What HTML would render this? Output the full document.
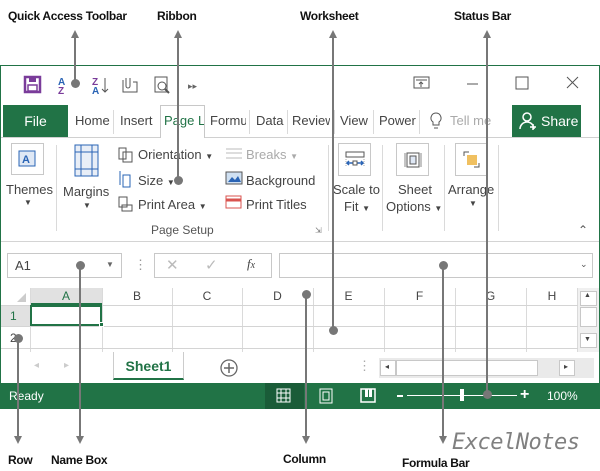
<!DOCTYPE html>
<html><head><meta charset="utf-8"><style>
*{margin:0;padding:0;box-sizing:border-box}
body{width:600px;height:471px;background:#fff;position:relative;overflow:hidden;font-family:"Liberation Sans",sans-serif;color:#333}
.a{position:absolute}
.lbl{position:absolute;font-weight:bold;font-size:12px;color:#111;letter-spacing:-0.3px}
.t{position:absolute;font-size:13px;color:#444;white-space:nowrap}
.ln{position:absolute;width:2px;background:#777}
.dot{position:absolute;width:9px;height:9px;border-radius:50%;background:#777}
.au{position:absolute;width:0;height:0;border-left:4px solid transparent;border-right:4px solid transparent;border-bottom:8px solid #777}
.ad{position:absolute;width:0;height:0;border-left:4px solid transparent;border-right:4px solid transparent;border-top:8px solid #777}
.vl{position:absolute;width:1px;background:#dadada}
.hl{position:absolute;height:1px;background:#d4d4d4}
.ch{position:absolute;top:288px;height:17px;font-size:12px;color:#444;text-align:center;line-height:17px}
.ib{position:absolute;border:1px solid #c8c8c8;background:#fff}
</style></head><body>

<div class="lbl" style="left:8px;top:9px">Quick Access Toolbar</div>
<div class="lbl" style="left:157px;top:9px">Ribbon</div>
<div class="lbl" style="left:300px;top:9px">Worksheet</div>
<div class="lbl" style="left:454px;top:9px">Status Bar</div>

<div class="a" style="left:0;top:65px;width:600px;height:344px;border:1px solid #217346;border-bottom:none;background:#fff"></div>

<svg class="a" style="left:22px;top:74px" width="180" height="22">
<rect x="3" y="3" width="15" height="15" fill="none" stroke="#7a3c9a" stroke-width="2.5"/><rect x="7" y="3" width="7" height="5" fill="#7a3c9a"/><rect x="6" y="11" width="9" height="6" fill="#fff" stroke="#7a3c9a" stroke-width="1.5"/>
<text x="36" y="11" font-size="10" fill="#2a64b5" font-family="Liberation Sans" font-weight="bold">A</text><text x="36" y="20" font-size="10" fill="#7a3c9a" font-family="Liberation Sans" font-weight="bold">Z</text>
<text x="70" y="11" font-size="10" fill="#7a3c9a" font-family="Liberation Sans" font-weight="bold">Z</text><text x="70" y="20" font-size="10" fill="#2a64b5" font-family="Liberation Sans" font-weight="bold">A</text><path d="M83 4v14m-3-3l3 3 3-3" stroke="#555" fill="none"/>
<path d="M101 6v12h14v-10h-4M104 4v8a2 2 0 004 0V4" stroke="#555" fill="none"/>
<rect x="133" y="3" width="12" height="15" fill="none" stroke="#555"/><circle cx="140" cy="12" r="4" fill="none" stroke="#555"/><path d="M143 15l4 4" stroke="#555" stroke-width="2"/>
<text x="166" y="15" font-size="9" fill="#666">▸▸</text>
</svg>
<svg class="a" style="left:410px;top:74px" width="185" height="20">
<rect x="4" y="3" width="15" height="11" fill="none" stroke="#555"/><path d="M6 6h11M11 13V8m-2 2l2-2 2 2" stroke="#555" fill="none"/>
<path d="M57 10h11" stroke="#555"/>
<rect x="106" y="3" width="12" height="12" fill="none" stroke="#555"/>
<path d="M157 3l11 11M168 3l-11 11" stroke="#555"/>
</svg>

<div class="a" style="left:3px;top:105px;width:65px;height:32px;background:#217346;color:#fff;font-size:14px;text-align:center;line-height:32px">File</div>
<div class="hl" style="left:1px;top:137px;width:598px;background:#d0d0d0"></div>
<div class="t" style="left:75px;top:113px">Home</div>
<div class="vl" style="left:113px;top:110px;height:24px"></div>
<div class="t" style="left:120px;top:113px">Insert</div>
<div class="a" style="left:160px;top:105px;width:45px;height:33px;border:1px solid #c8c8c8;border-bottom:none;background:#fff"></div>
<div class="t" style="left:164px;top:113px;color:#217346;width:40px;overflow:hidden">Page L</div>
<div class="t" style="left:210px;top:113px;width:36px;overflow:hidden">Formu</div>
<div class="vl" style="left:249px;top:110px;height:24px"></div>
<div class="t" style="left:256px;top:113px">Data</div>
<div class="vl" style="left:287px;top:110px;height:24px"></div>
<div class="t" style="left:292px;top:113px;width:38px;overflow:hidden">Review</div>
<div class="vl" style="left:334px;top:110px;height:24px"></div>
<div class="t" style="left:340px;top:113px">View</div>
<div class="vl" style="left:373px;top:110px;height:24px"></div>
<div class="t" style="left:379px;top:113px;width:38px;overflow:hidden">Power</div>
<div class="vl" style="left:419px;top:110px;height:24px"></div>
<svg class="a" style="left:429px;top:111px" width="14" height="20"><path d="M7 2a5 5 0 00-3 9v3h6v-3a5 5 0 00-3-9zM5 17h4" stroke="#555" fill="none"/></svg>
<div class="t" style="left:450px;top:113px;color:#aaa">Tell me</div>
<div class="a" style="left:512px;top:105px;width:69px;height:32px;background:#217346;color:#fff;font-size:14px;line-height:32px;padding-left:29px">Share</div>
<svg class="a" style="left:518px;top:110px" width="22" height="22"><circle cx="9" cy="7" r="4" fill="none" stroke="#fff" stroke-width="1.5"/><path d="M2 19a7 7 0 0114 0M15 14v6M12 17h6" stroke="#fff" stroke-width="1.5" fill="none"/></svg>

<div class="ib" style="left:11px;top:143px;width:33px;height:32px"></div>
<svg class="a" style="left:18px;top:150px" width="20" height="18"><rect x="1" y="1" width="16" height="15" fill="#dfe8f5" stroke="#2a64b5"/><text x="4" y="13" font-size="11" font-weight="bold" fill="#2a64b5" font-family="Liberation Sans">A</text></svg>
<div class="t" style="left:6px;top:182px">Themes</div>
<div class="t" style="left:24px;top:198px;font-size:8px">▼</div>
<div class="vl" style="left:56px;top:145px;height:86px"></div>
<svg class="a" style="left:74px;top:144px" width="26" height="34"><rect x="1" y="1" width="23" height="31" fill="#e8eef7" stroke="#2a64b5"/><path d="M7 1v31M18 1v31M1 8h23M1 25h23" stroke="#2a64b5"/></svg>
<div class="t" style="left:63px;top:184px">Margins</div>
<div class="t" style="left:83px;top:201px;font-size:8px">▼</div>
<svg class="a" style="left:116px;top:145px" width="18" height="72"><path d="M3 3h7v11H3zM7 7h9v10H7z" fill="#fff" stroke="#555"/><path d="M4 26v14M14 30v12H7V30z" stroke="#2a64b5" fill="none"/><path d="M3 52h8v10H3zM6 60h10v6H6z" stroke="#555" fill="#fff"/></svg>
<div class="t" style="left:138px;top:147px">Orientation <span style="font-size:8px">▼</span></div>
<div class="t" style="left:138px;top:173px">Size <span style="font-size:8px">▼</span></div>
<div class="t" style="left:138px;top:197px">Print Area <span style="font-size:8px">▼</span></div>
<svg class="a" style="left:224px;top:145px" width="20" height="72"><path d="M2 4h16M2 13h16M2 8h16" stroke="#bbb"/><rect x="2" y="27" width="16" height="12" fill="#cfe0f2" stroke="#555"/><path d="M4 37l4-5 3 3 3-4 3 6" fill="#2a64b5"/><rect x="2" y="51" width="15" height="12" fill="#fff" stroke="#d9534f"/><path d="M2 55h15" stroke="#d9534f" stroke-width="3"/></svg>
<div class="t" style="left:246px;top:147px;color:#aaa">Breaks <span style="font-size:8px">▼</span></div>
<div class="t" style="left:246px;top:173px">Background</div>
<div class="t" style="left:246px;top:197px">Print Titles</div>
<div class="t" style="left:151px;top:223px;font-size:12px;color:#555">Page Setup</div>
<div class="t" style="left:315px;top:226px;font-size:8px;color:#777">⇲</div>
<div class="vl" style="left:328px;top:145px;height:86px"></div>
<div class="ib" style="left:338px;top:143px;width:33px;height:33px"></div>
<svg class="a" style="left:344px;top:150px" width="22" height="20"><rect x="2" y="2" width="18" height="5" fill="none" stroke="#555"/><path d="M2 9v8M20 9v8" stroke="#aaa" stroke-dasharray="1 1"/><path d="M3 13h6M13 13h6M5 11l-2 2 2 2M17 11l2 2-2 2" stroke="#2a64b5" fill="none" stroke-width="1.5"/><rect x="9" y="11" width="4" height="4" fill="none" stroke="#555"/></svg>
<div class="t" style="left:333px;top:182px">Scale to</div>
<div class="t" style="left:344px;top:199px">Fit <span style="font-size:8px">▼</span></div>
<div class="vl" style="left:382px;top:145px;height:86px"></div>
<div class="ib" style="left:396px;top:143px;width:33px;height:33px"></div>
<svg class="a" style="left:402px;top:149px" width="22" height="22"><rect x="5" y="4" width="12" height="14" fill="none" stroke="#555"/><rect x="8" y="7" width="6" height="8" fill="#dfe8f5" stroke="#555"/><path d="M3 4v14M19 4v14" stroke="#888"/></svg>
<div class="t" style="left:398px;top:182px">Sheet</div>
<div class="t" style="left:386px;top:199px">Options <span style="font-size:8px">▼</span></div>
<div class="vl" style="left:444px;top:145px;height:86px"></div>
<div class="ib" style="left:455px;top:143px;width:33px;height:33px;border-right:none"></div>
<svg class="a" style="left:461px;top:149px" width="22" height="22"><path d="M3 7V3h5M18 14v4h-5" stroke="#555" fill="none"/><rect x="6" y="6" width="10" height="10" fill="#f0c060"/></svg>
<div class="t" style="left:448px;top:182px">Arrange</div>
<div class="t" style="left:469px;top:199px;font-size:8px">▼</div>
<div class="vl" style="left:498px;top:145px;height:86px"></div>
<div class="t" style="left:578px;top:223px;font-size:12px;color:#555">⌃</div>
<div class="hl" style="left:1px;top:241px;width:598px"></div>

<div class="ib" style="left:7px;top:253px;width:115px;height:25px"></div>
<div class="t" style="left:15px;top:258px">A1</div>
<div class="t" style="left:106px;top:260px;font-size:8px;color:#666">▼</div>
<div class="t" style="left:134px;top:257px;color:#999">⋮</div>
<div class="ib" style="left:154px;top:253px;width:118px;height:25px"></div>
<div class="t" style="left:166px;top:256px;color:#bbb;font-size:15px">✕</div>
<div class="t" style="left:205px;top:256px;color:#bbb;font-size:15px">✓</div>
<div class="t" style="left:247px;top:256px;font-family:'Liberation Serif';font-style:italic;color:#444">f<span style="font-size:10px">x</span></div>
<div class="ib" style="left:279px;top:253px;width:314px;height:25px"></div>
<div class="t" style="left:580px;top:259px;font-size:9px;color:#555">⌄</div>

<div class="a" style="left:1px;top:288px;width:577px;height:17px;background:#fff"></div>
<div class="a" style="left:30px;top:288px;width:72px;height:17px;background:#e1e1e1;border-bottom:2px solid #217346"></div>
<div class="a" style="left:1px;top:305px;width:29px;height:21px;background:#e1e1e1"></div>
<svg class="a" style="left:17px;top:293px" width="10" height="10"><path d="M9 0v9H0z" fill="#ccc"/></svg>
<div class="ch" style="left:30px;width:72px;color:#217346">A</div>
<div class="ch" style="left:102px;width:70px">B</div>
<div class="ch" style="left:172px;width:70px">C</div>
<div class="ch" style="left:242px;width:71px">D</div>
<div class="ch" style="left:313px;width:71px">E</div>
<div class="ch" style="left:384px;width:71px">F</div>
<div class="ch" style="left:455px;width:71px">G</div>
<div class="ch" style="left:526px;width:52px">H</div>
<div class="vl" style="left:30px;top:288px;height:64px"></div>
<div class="vl" style="left:102px;top:288px;height:64px"></div>
<div class="vl" style="left:172px;top:288px;height:64px"></div>
<div class="vl" style="left:242px;top:288px;height:64px"></div>
<div class="vl" style="left:313px;top:288px;height:64px"></div>
<div class="vl" style="left:384px;top:288px;height:64px"></div>
<div class="vl" style="left:455px;top:288px;height:64px"></div>
<div class="vl" style="left:526px;top:288px;height:64px"></div>
<div class="vl" style="left:577px;top:288px;height:64px"></div>
<div class="hl" style="left:1px;top:305px;width:577px"></div>
<div class="hl" style="left:1px;top:326px;width:577px"></div>
<div class="hl" style="left:1px;top:348px;width:577px"></div>
<div class="t" style="left:10px;top:309px;font-size:12px;color:#217346">1</div>
<div class="t" style="left:10px;top:331px;font-size:12px">2</div>
<div class="a" style="left:30px;top:305px;width:72px;height:21px;border:2px solid #217346"></div>
<div class="a" style="left:99px;top:322px;width:5px;height:5px;background:#217346;border:1px solid #fff"></div>
<div class="a" style="left:578px;top:288px;width:21px;height:64px;background:#f0f0f0"></div>
<div class="ib" style="left:580px;top:291px;width:17px;height:15px"></div><div class="t" style="left:584px;top:292px;font-size:7px">▲</div>
<div class="ib" style="left:580px;top:307px;width:17px;height:20px"></div>
<div class="ib" style="left:580px;top:333px;width:17px;height:15px"></div><div class="t" style="left:584px;top:336px;font-size:7px">▼</div>

<div class="a" style="left:1px;top:352px;width:598px;height:31px;background:#fff"></div>
<div class="t" style="left:34px;top:360px;color:#ccc;font-size:10px">◂</div>
<div class="t" style="left:64px;top:360px;color:#ccc;font-size:10px">▸</div>
<div class="a" style="left:113px;top:352px;width:71px;height:28px;border-left:1px solid #ccc;border-right:1px solid #ccc;border-bottom:2px solid #217346;color:#217346;font-weight:bold;font-size:14px;text-align:center;line-height:28px">Sheet1</div>
<svg class="a" style="left:219px;top:358px" width="20" height="20"><circle cx="10" cy="10" r="8" fill="none" stroke="#666" stroke-width="1.3"/><path d="M10 5v10M5 10h10" stroke="#666" stroke-width="1.5"/></svg>
<div class="t" style="left:358px;top:358px;color:#aaa">⋮</div>
<div class="a" style="left:379px;top:358px;width:215px;height:20px;background:#eaeaea"></div>
<div class="ib" style="left:380px;top:360px;width:16px;height:16px"></div><div class="t" style="left:385px;top:362px;font-size:8px">◂</div>
<div class="ib" style="left:396px;top:360px;width:142px;height:16px"></div>
<div class="ib" style="left:559px;top:360px;width:16px;height:16px"></div><div class="t" style="left:564px;top:362px;font-size:8px">▸</div>

<div class="a" style="left:0;top:383px;width:600px;height:26px;background:#217346"></div>
<div class="a" style="left:265px;top:383px;width:39px;height:26px;background:#1a5c38"></div>
<div class="t" style="left:9px;top:389px;color:#fff;font-size:12px">Ready</div>
<svg class="a" style="left:275px;top:387px" width="110" height="18"><rect x="2" y="2" width="13" height="13" fill="none" stroke="#fff"/><path d="M6 2v13M11 2v13M2 6h13M2 11h13" stroke="#fff"/><rect x="45" y="2" width="12" height="14" fill="none" stroke="#fff"/><rect x="48" y="5" width="6" height="8" fill="none" stroke="#fff"/><rect x="86" y="2" width="14" height="13" fill="none" stroke="#fff" stroke-width="1.5"/><rect x="90" y="2" width="3" height="8" fill="#fff"/><rect x="94" y="2" width="3" height="8" fill="#fff"/></svg>
<div class="a" style="left:397px;top:395px;width:6px;height:2px;background:#fff"></div>
<div class="a" style="left:407px;top:395px;width:110px;height:1px;background:#fff"></div>
<div class="a" style="left:460px;top:389px;width:4px;height:12px;background:#fff"></div>
<div class="t" style="left:520px;top:386px;color:#fff;font-size:16px;font-weight:bold">+</div>
<div class="t" style="left:547px;top:389px;color:#fff;font-size:12px">100%</div>

<div class="au" style="left:71px;top:30px"></div><div class="ln" style="left:74px;top:36px;height:47px"></div><div class="dot" style="left:71px;top:79px"></div>
<div class="au" style="left:174px;top:30px"></div><div class="ln" style="left:177px;top:36px;height:144px"></div><div class="dot" style="left:174px;top:176px"></div>
<div class="au" style="left:329px;top:30px"></div><div class="ln" style="left:332px;top:36px;height:294px"></div><div class="dot" style="left:329px;top:326px"></div>
<div class="au" style="left:483px;top:30px"></div><div class="ln" style="left:486px;top:36px;height:359px"></div><div class="dot" style="left:483px;top:390px"></div>
<div class="dot" style="left:14px;top:334px"></div><div class="ln" style="left:17px;top:338px;height:100px"></div><div class="ad" style="left:14px;top:436px"></div>
<div class="dot" style="left:76px;top:261px"></div><div class="ln" style="left:79px;top:265px;height:173px"></div><div class="ad" style="left:76px;top:436px"></div>
<div class="dot" style="left:302px;top:290px"></div><div class="ln" style="left:305px;top:294px;height:144px"></div><div class="ad" style="left:302px;top:436px"></div>
<div class="dot" style="left:439px;top:261px"></div><div class="ln" style="left:442px;top:265px;height:173px"></div><div class="ad" style="left:439px;top:436px"></div>

<div class="lbl" style="left:8px;top:453px">Row</div>
<div class="lbl" style="left:51px;top:453px">Name Box</div>
<div class="lbl" style="left:283px;top:452px">Column</div>
<div class="lbl" style="left:402px;top:456px">Formula Bar</div>
<div class="a" style="left:452px;top:430px;font-family:'DejaVu Sans Mono','Liberation Mono',monospace;font-style:italic;font-size:22px;color:#808080;letter-spacing:-0.5px">ExcelNotes</div>
</body></html>
